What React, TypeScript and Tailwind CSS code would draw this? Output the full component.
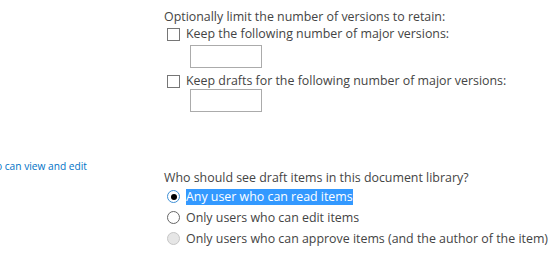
import React from 'react';

const Checkbox: React.FC<{ label: string }> = ({ label }) => (
    <label className="flex items-center h-[16px] pl-[3px] gap-[6px] whitespace-nowrap">
        <span className="w-[13px] h-[13px] border border-[#767676] bg-white shrink-0" />
        <span>{label}</span>
    </label>
);

const TextBox: React.FC = () => (
    <div className="ml-[26px] w-[72px] h-[23px] border border-[#ababab] bg-white" />
);

type RadioState = 'checked' | 'normal' | 'disabled';

const Radio: React.FC<{ label: string; state: RadioState; highlight?: boolean }> = ({ label, state, highlight }) => (
    <label className="flex items-center h-[21px] pl-[3px] gap-[6px] whitespace-nowrap">
        {state === 'checked' && (
            <span className="w-[13px] h-[13px] rounded-full border border-[#3d8fd6] bg-white flex items-center justify-center shrink-0">
                <span className="w-[6px] h-[6px] rounded-full bg-black" />
            </span>
        )}
        {state === 'normal' && <span className="w-[13px] h-[13px] rounded-full border border-[#666] bg-white shrink-0" />}
        {state === 'disabled' && <span className="w-[13px] h-[13px] rounded-full border border-[#c6c6c6] bg-[#e6e6e6] shrink-0" />}
        <span className={highlight ? 'bg-[#3399ff] text-white' : ''}>{label}</span>
    </label>
);

export default function App() {
    return (
        <div className="w-[552px] h-[265px] overflow-hidden bg-white text-[#444] text-[12.4px] leading-[16px] font-['Open_Sans',sans-serif]">
            <div className="pl-[164px] pt-[9px]">
                <p className="whitespace-nowrap">Optionally limit the number of versions to retain:</p>
                <div className="mt-[1px]">
                    <Checkbox label="Keep the following number of major versions:" />
                </div>
                <div className="mt-[3px]">
                    <TextBox />
                </div>
                <div className="mt-[5px]">
                    <Checkbox label="Keep drafts for the following number of major versions:" />
                </div>
                <TextBox />
            </div>

            <div className="flex mt-[46px]">
                <div className="w-[164px] shrink-0 overflow-hidden flex justify-end pr-[77px]">
                    <span className="whitespace-nowrap text-[10.2px] text-[#0072c6]">Only users who can view and edit</span>
                </div>
                <div className="pt-[12px]">
                    <p className="whitespace-nowrap">Who should see draft items in this document library?</p>
                    <Radio label="Any user who can read items" state="checked" highlight />
                    <Radio label="Only users who can edit items" state="normal" />
                    <Radio label="Only users who can approve items (and the author of the item)" state="disabled" />
                </div>
            </div>
        </div>
    );
}
